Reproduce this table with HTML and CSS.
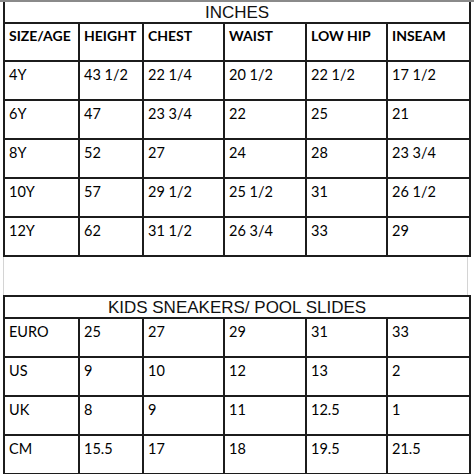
FILE: index.html
```html
<!DOCTYPE html>
<html>
<head>
<meta charset="utf-8">
<link rel="stylesheet" href="styles.css">
</head>
<body>
<div class="page">
  <div class="band"></div>
  <table class="chart chart-top">
    <colgroup>
      <col class="c1"><col class="c2"><col class="c3"><col class="c4"><col class="c5"><col class="c6">
    </colgroup>
    <tr class="title"><td colspan="6">INCHES</td></tr>
    <tr class="head row"><td>SIZE/AGE</td><td>HEIGHT</td><td>CHEST</td><td>WAIST</td><td>LOW HIP</td><td>INSEAM</td></tr>
    <tr class="row"><td>4Y</td><td>43 1/2</td><td>22 1/4</td><td>20 1/2</td><td>22 1/2</td><td>17 1/2</td></tr>
    <tr class="row"><td>6Y</td><td>47</td><td>23 3/4</td><td>22</td><td>25</td><td>21</td></tr>
    <tr class="row"><td>8Y</td><td>52</td><td>27</td><td>24</td><td>28</td><td>23 3/4</td></tr>
    <tr class="row"><td>10Y</td><td>57</td><td>29 1/2</td><td>25 1/2</td><td>31</td><td>26 1/2</td></tr>
    <tr class="row"><td>12Y</td><td>62</td><td>31 1/2</td><td>26 3/4</td><td>33</td><td>29</td></tr>
  </table>
  <div class="gap"></div>
  <table class="chart chart-bottom">
    <colgroup>
      <col class="c1"><col class="c2"><col class="c3"><col class="c4"><col class="c5"><col class="c6">
    </colgroup>
    <tr class="title"><td colspan="6">KIDS SNEAKERS/ POOL SLIDES</td></tr>
    <tr class="row"><td>EURO</td><td>25</td><td>27</td><td>29</td><td>31</td><td>33</td></tr>
    <tr class="row"><td>US</td><td>9</td><td>10</td><td>12</td><td>13</td><td>2</td></tr>
    <tr class="row"><td>UK</td><td>8</td><td>9</td><td>11</td><td>12.5</td><td>1</td></tr>
    <tr class="row"><td>CM</td><td>15.5</td><td>17</td><td>18</td><td>19.5</td><td>21.5</td></tr>
  </table>
  <div class="band band-bottom"></div>
</div>
</body>
</html>
```

FILE: styles.css
```css
html, body {
  margin: 0;
  padding: 0;
  background: #ffffff;
}
.page {
  width: 474px;
  height: 474px;
  overflow: hidden;
  display: flex;
  flex-direction: column;
}
.band {
  height: 2px;
  background: #8a8a8a;
  flex: none;
}
.band-bottom {
  height: 4px;
  background: #8a8a8a;
}
.chart {
  border-collapse: collapse;
  table-layout: fixed;
  width: 466px;
  margin-left: 3px;
  flex: none;
  color: #000;
  font-family: "Lato", "Liberation Sans", sans-serif;
  font-size: 14.5px;
}
.chart td {
  border: 2px solid #1c1c1c;
  padding: 5px 0 0 4px;
  vertical-align: top;
  line-height: 16px;
  white-space: nowrap;
  overflow: hidden;
}
.c1 { width: 75px; }
.c2 { width: 64px; }
.c3 { width: 81px; }
.c4 { width: 82px; }
.c5 { width: 81px; }
.c6 { width: 83px; }
.chart .title td {
  text-align: center;
  vertical-align: middle;
  padding: 1px 0 0 0;
  font-family: "Liberation Sans", Arial, sans-serif;
  font-size: 17px;
  line-height: 18px;
  height: 19px;
  color: #111;
}
.chart-top .title td {
  border-top: none;
}
.chart .row td {
  height: 32px;
}
.chart .head td {
  font-weight: 700;
  font-size: 14px;
  padding-top: 4px;
}
.gap {
  height: 38px;
  flex: none;
  margin-left: 3px;
  width: 463px;
  border-left: 1px solid #d4d4d4;
  border-right: 1px solid #d4d4d4;
}
.chart-bottom .row td {
  height: 32px;
}
```
